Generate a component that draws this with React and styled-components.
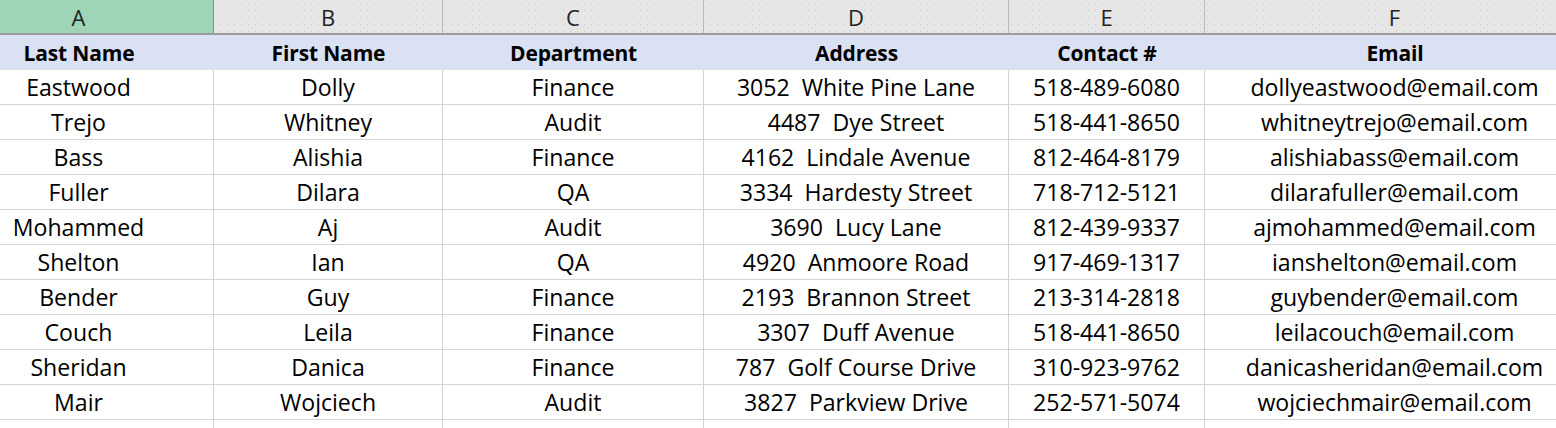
import styled, { createGlobalStyle } from 'styled-components';

const GlobalStyle = createGlobalStyle`
  html, body {
    margin: 0;
    padding: 0;
    background: #ffffff;
    overflow: hidden;
  }
  body {
    width: 1556px;
    height: 428px;
    font-family: "Open Sans", "Liberation Sans", sans-serif;
    color: #000;
  }
`;

const COLS = '270px 229px 261px 305px 196px 380px';

const Viewport = styled.div`
  width: 1556px;
  height: 428px;
  overflow: hidden;
`;

const Sheet = styled.div`
  margin-left: -56px;
  width: 1641px;
`;

const Row = styled.div`
  display: grid;
  grid-template-columns: ${COLS};
`;

const LetterRow = styled(Row)`
  height: 33px;
  border-bottom: 2px solid #9c9c9c;
  background-color: #e6e6e6;
  background-image: radial-gradient(circle, #c9c9c9 0.7px, transparent 1px);
  background-size: 7px 7px;
`;

const Letter = styled.div`
  display: flex;
  align-items: center;
  justify-content: center;
  font-size: 22px;
  color: #222;
  border-right: 1px solid ${(p) => (p.$selected ? '#7a9a88' : '#b8b8b8')};
  background: ${(p) => (p.$selected ? '#9fd5b7' : 'transparent')};
`;

const TitleRow = styled(Row)`
  height: 35px;
  background: #d9e1f2;
`;

const TitleCell = styled.div`
  display: flex;
  align-items: center;
  justify-content: center;
  font-size: 21px;
  font-weight: 700;
  letter-spacing: -0.15px;
`;

const DataRow = styled(Row)`
  height: 34px;
  border-bottom: 1px solid #d4d4d4;
`;

const Cell = styled.div`
  display: flex;
  align-items: center;
  justify-content: center;
  font-size: 23.1px;
  white-space: pre;
  border-right: 1px solid #d4d4d4;
`;

const letters = ['A', 'B', 'C', 'D', 'E', 'F'];
const titles = ['Last Name', 'First Name', 'Department', 'Address', 'Contact #', 'Email'];

const people = [
  ['Eastwood', 'Dolly', 'Finance', '3052  White Pine Lane', '518-489-6080', 'dollyeastwood@email.com'],
  ['Trejo', 'Whitney', 'Audit', '4487  Dye Street', '518-441-8650', 'whitneytrejo@email.com'],
  ['Bass', 'Alishia', 'Finance', '4162  Lindale Avenue', '812-464-8179', 'alishiabass@email.com'],
  ['Fuller', 'Dilara', 'QA', '3334  Hardesty Street', '718-712-5121', 'dilarafuller@email.com'],
  ['Mohammed', 'Aj', 'Audit', '3690  Lucy Lane', '812-439-9337', 'ajmohammed@email.com'],
  ['Shelton', 'Ian', 'QA', '4920  Anmoore Road', '917-469-1317', 'ianshelton@email.com'],
  ['Bender', 'Guy', 'Finance', '2193  Brannon Street', '213-314-2818', 'guybender@email.com'],
  ['Couch', 'Leila', 'Finance', '3307  Duff Avenue', '518-441-8650', 'leilacouch@email.com'],
  ['Sheridan', 'Danica', 'Finance', '787  Golf Course Drive', '310-923-9762', 'danicasheridan@email.com'],
  ['Mair', 'Wojciech', 'Audit', '3827  Parkview Drive', '252-571-5074', 'wojciechmair@email.com'],
  ['', '', '', '', '', ''],
];

export default function App() {
  return (
    <>
      <GlobalStyle />
      <Viewport>
        <Sheet>
          <LetterRow>
            {letters.map((l, i) => (
              <Letter key={l} $selected={i === 0}>{l}</Letter>
            ))}
          </LetterRow>
          <TitleRow>
            {titles.map((t) => (
              <TitleCell key={t}>{t}</TitleCell>
            ))}
          </TitleRow>
          {people.map((row, r) => (
            <DataRow key={r}>
              {row.map((v, c) => (
                <Cell key={c}>{v}</Cell>
              ))}
            </DataRow>
          ))}
        </Sheet>
      </Viewport>
    </>
  );
}
